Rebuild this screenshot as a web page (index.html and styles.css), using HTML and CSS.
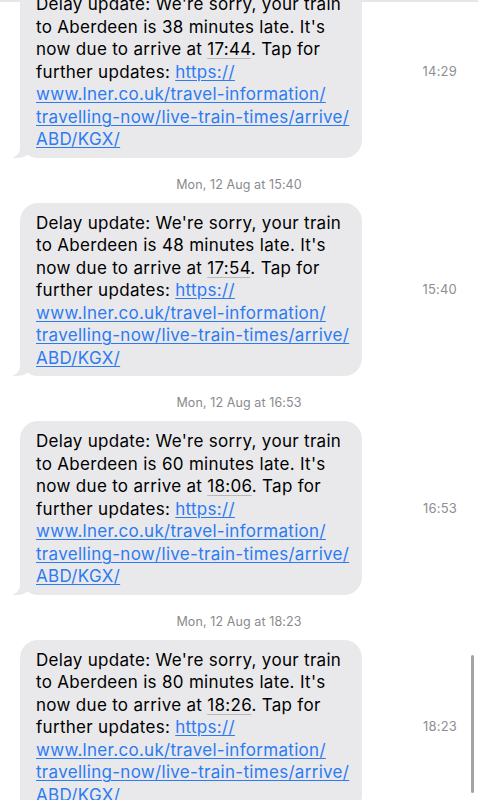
FILE: index.html
```html
<!DOCTYPE html>
<html>
  <head>
    <meta charset="utf-8">
    <title>LNER</title>
    <link rel="stylesheet" href="styles.css">
  </head>
  <body>
    <div class="topline"></div>
    <div class="thread">
      <div class="row">
        <div class="bubble">
          Delay update: We're sorry, your train<br>
          to Aberdeen is 38 minutes late. It's<br>
          now due to arrive at <span class="time">17:44</span>. Tap for<br>
          further updates: <a href="#">https://<br>www.lner.co.uk/travel-information/<br>travelling-now/live-train-times/arrive/<br>ABD/KGX/</a>
        </div>
        <div class="sent">14:29</div>
      </div>

      <div class="stamp">Mon, 12 Aug at 15:40</div>
      <div class="row">
        <div class="bubble">
          Delay update: We're sorry, your train<br>
          to Aberdeen is 48 minutes late. It's<br>
          now due to arrive at <span class="time">17:54</span>. Tap for<br>
          further updates: <a href="#">https://<br>www.lner.co.uk/travel-information/<br>travelling-now/live-train-times/arrive/<br>ABD/KGX/</a>
        </div>
        <div class="sent">15:40</div>
      </div>

      <div class="stamp">Mon, 12 Aug at 16:53</div>
      <div class="row">
        <div class="bubble">
          Delay update: We're sorry, your train<br>
          to Aberdeen is 60 minutes late. It's<br>
          now due to arrive at <span class="time">18:06</span>. Tap for<br>
          further updates: <a href="#">https://<br>www.lner.co.uk/travel-information/<br>travelling-now/live-train-times/arrive/<br>ABD/KGX/</a>
        </div>
        <div class="sent">16:53</div>
      </div>

      <div class="stamp">Mon, 12 Aug at 18:23</div>
      <div class="row">
        <div class="bubble">
          Delay update: We're sorry, your train<br>
          to Aberdeen is 80 minutes late. It's<br>
          now due to arrive at <span class="time">18:26</span>. Tap for<br>
          further updates: <a href="#">https://<br>www.lner.co.uk/travel-information/<br>travelling-now/live-train-times/arrive/<br>ABD/KGX/</a>
        </div>
        <div class="sent">18:23</div>
      </div>
    </div>
    <div class="scrollbar"></div>
  </body>
</html>
```

FILE: styles.css
```css
html, body {
  margin: 0;
  height: 100%;
  overflow: hidden;
}

body {
  font-family: Inter, "Noto Sans", sans-serif;
  background: #fff;
  color: #000;
  position: relative;
}

.topline {
  position: absolute;
  top: 0;
  left: 0;
  right: 0;
  height: 2px;
  background: #e6e6e8;
}

.thread {
  margin-top: -16px;
}

.row {
  display: flex;
  align-items: center;
}

.bubble {
  position: relative;
  box-sizing: border-box;
  width: 342px;
  margin-left: 20px;
  padding: 9px 0 7px 16px;
  background: #e9e9eb;
  border-radius: 18px;
  font-size: 17px;
  line-height: 22.5px;
  letter-spacing: 0.3px;
  white-space: nowrap;
}

/* tail */
.bubble::before {
  content: "";
  position: absolute;
  left: -7px;
  bottom: 0;
  width: 20px;
  height: 20px;
  background: #e9e9eb;
  border-bottom-right-radius: 16px 14px;
}

.bubble::after {
  content: "";
  position: absolute;
  left: -26px;
  bottom: 0;
  width: 26px;
  height: 20px;
  background: #fff;
  border-bottom-right-radius: 10px;
}

.bubble a {
  color: #2c7bf3;
  text-decoration: underline;
  text-underline-offset: 2px;
  text-decoration-thickness: 1px;
}

.time {
  text-decoration: underline;
  text-decoration-color: #b9b9bd;
  text-underline-offset: 3px;
  text-decoration-thickness: 1px;
}

.sent {
  margin-left: auto;
  margin-right: 21px;
  font-size: 13px;
  letter-spacing: 0.2px;
  color: #8e8e93;
}

.stamp {
  padding: 20px 0 11px;
  line-height: 14px;
  font-size: 12.5px;
  letter-spacing: 0.1px;
  text-align: center;
  color: #8a8a8e;
}

.scrollbar {
  position: absolute;
  right: 4px;
  top: 655px;
  width: 3px;
  height: 138px;
  border-radius: 2px;
  background: #a4a4a6;
}
```
